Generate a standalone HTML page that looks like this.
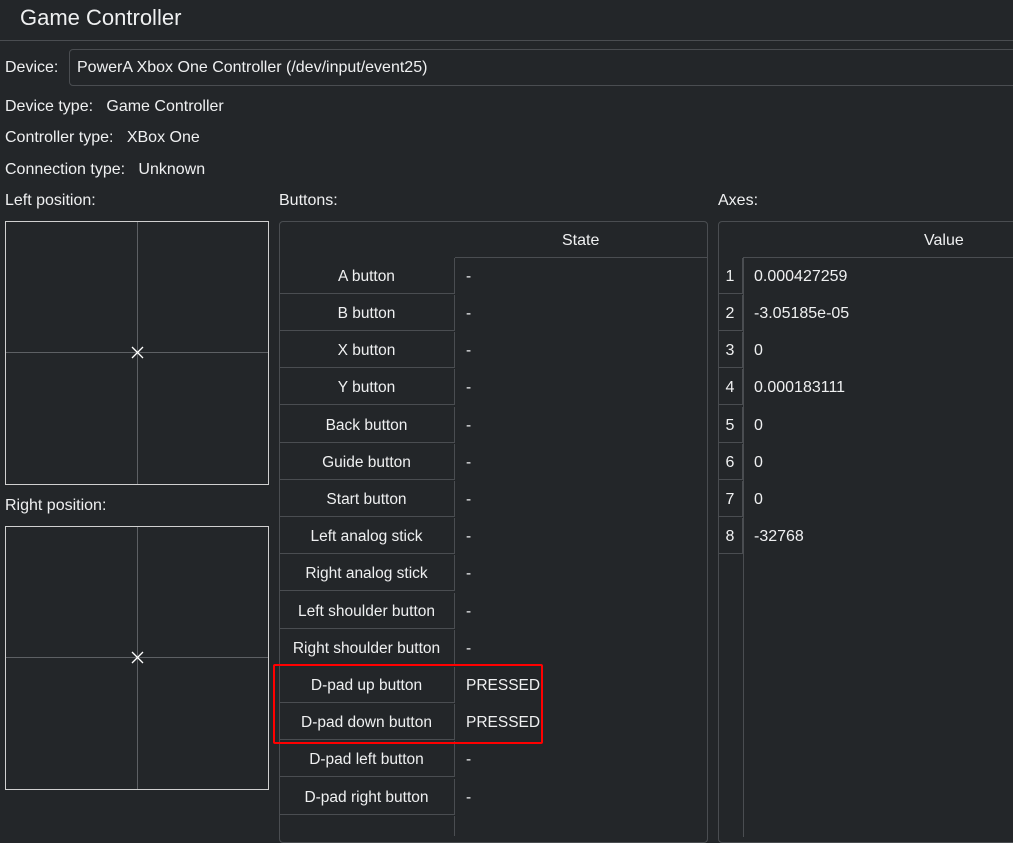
<!DOCTYPE html><html><head><style>
body{margin:0;width:1013px;height:830px;background:#232629;color:#eff0f1;font-family:"Liberation Sans","DejaVu Sans",sans-serif;font-size:16px;overflow:hidden;position:relative}
.a{position:absolute;white-space:nowrap}
.l{position:absolute;background:#4a4d51}
.rh{position:absolute;left:279px;width:175px;height:35px;border-right:1px solid #4a4d51;border-bottom:1px solid #4a4d51;text-align:center;line-height:37px;font-size:15.5px}
.st{position:absolute;left:466px;line-height:37px;font-size:15.5px}
.ah{position:absolute;left:718px;width:24px;height:35px;border-right:1px solid #4a4d51;border-bottom:1px solid #4a4d51;text-align:center;line-height:37px}
.av{position:absolute;left:754px;line-height:37px}
</style></head><body>
<div class="a" style="left:20px;top:5px;font-size:22px">Game Controller</div>
<div class="l" style="left:0;top:40px;width:1013px;height:1px"></div>
<div class="a" style="left:5px;top:59px">Device:</div>
<div class="a" style="left:69px;top:49px;width:960px;height:35px;border:1px solid #4a4d51;border-radius:4px;background:#232629"></div>
<div class="a" style="left:77px;top:59px">PowerA Xbox One Controller (/dev/input/event25)</div>
<div class="a" style="left:5px;top:98px">Device type:&nbsp;&nbsp; Game Controller</div>
<div class="a" style="left:5px;top:129px">Controller type:&nbsp;&nbsp; XBox One</div>
<div class="a" style="left:5px;top:161px">Connection type:&nbsp;&nbsp; Unknown</div>
<div class="a" style="left:5px;top:192px">Left position:</div>
<div class="a" style="left:279px;top:192px">Buttons:</div>
<div class="a" style="left:718px;top:192px">Axes:</div>
<div class="a" style="left:5px;top:497px">Right position:</div>
<svg class="a" style="left:0;top:0" width="280" height="830">
<g fill="none" stroke-width="1">
<rect x="5.5" y="221.5" width="263" height="263" stroke="#d0d0d0"/>
<line x1="137.5" y1="222" x2="137.5" y2="484" stroke="#5d6064"/><line x1="6" y1="352.5" x2="268" y2="352.5" stroke="#5d6064"/>
<path d="M132 347l11 11M143 347l-11 11" stroke="#fff" stroke-width="1.3"/>
<rect x="5.5" y="526.5" width="263" height="263" stroke="#d0d0d0"/>
<line x1="137.5" y1="527" x2="137.5" y2="789" stroke="#5d6064"/><line x1="6" y1="657.5" x2="268" y2="657.5" stroke="#5d6064"/>
<path d="M132 652l11 11M143 652l-11 11" stroke="#fff" stroke-width="1.3"/>
</g></svg>
<div class="a" style="left:279px;top:221px;width:427px;height:620px;border:1px solid #4a4d51;border-radius:4px"></div>
<div class="l" style="left:455px;top:257px;width:252px;height:1px"></div>
<div class="a" style="left:562px;top:232px">State</div>
<div class="a" style="left:718px;top:221px;width:320px;height:620px;border:1px solid #4a4d51;border-radius:4px"></div>
<div class="l" style="left:743px;top:257px;width:280px;height:1px"></div>
<div class="l" style="left:743px;top:257px;width:1px;height:580px"></div>
<div class="a" style="left:924px;top:232px">Value</div>
<div class="rh" style="top:258px">A button</div><div class="st" style="top:258px">-</div>
<div class="rh" style="top:295px">B button</div><div class="st" style="top:295px">-</div>
<div class="rh" style="top:332px">X button</div><div class="st" style="top:332px">-</div>
<div class="rh" style="top:369px">Y button</div><div class="st" style="top:369px">-</div>
<div class="rh" style="top:407px">Back button</div><div class="st" style="top:407px">-</div>
<div class="rh" style="top:444px">Guide button</div><div class="st" style="top:444px">-</div>
<div class="rh" style="top:481px">Start button</div><div class="st" style="top:481px">-</div>
<div class="rh" style="top:518px">Left analog stick</div><div class="st" style="top:518px">-</div>
<div class="rh" style="top:555px">Right analog stick</div><div class="st" style="top:555px">-</div>
<div class="rh" style="top:593px">Left shoulder button</div><div class="st" style="top:593px">-</div>
<div class="rh" style="top:630px">Right shoulder button</div><div class="st" style="top:630px">-</div>
<div class="rh" style="top:667px">D-pad up button</div><div class="st" style="top:667px">PRESSED</div>
<div class="rh" style="top:704px">D-pad down button</div><div class="st" style="top:704px">PRESSED</div>
<div class="rh" style="top:741px">D-pad left button</div><div class="st" style="top:741px">-</div>
<div class="rh" style="top:779px">D-pad right button</div><div class="st" style="top:779px">-</div>
<div class="a" style="left:279px;top:816px;width:175px;height:20px;border-right:1px solid #4a4d51"></div>
<div class="a" style="left:273px;top:664px;width:266px;height:76px;border:2px solid #f00;border-radius:2px"></div>
<div class="ah" style="top:258px">1</div><div class="av" style="top:258px">0.000427259</div>
<div class="ah" style="top:295px">2</div><div class="av" style="top:295px">-3.05185e-05</div>
<div class="ah" style="top:332px">3</div><div class="av" style="top:332px">0</div>
<div class="ah" style="top:369px">4</div><div class="av" style="top:369px">0.000183111</div>
<div class="ah" style="top:407px">5</div><div class="av" style="top:407px">0</div>
<div class="ah" style="top:444px">6</div><div class="av" style="top:444px">0</div>
<div class="ah" style="top:481px">7</div><div class="av" style="top:481px">0</div>
<div class="ah" style="top:518px">8</div><div class="av" style="top:518px">-32768</div>
</body></html>
